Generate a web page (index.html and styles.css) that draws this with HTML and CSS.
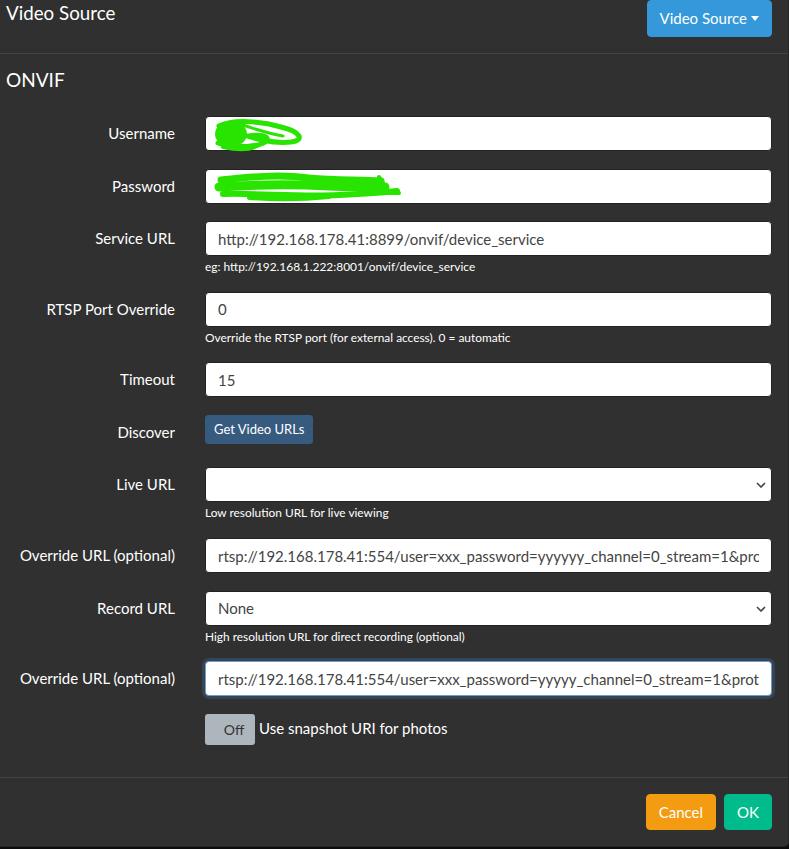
FILE: index.html
```html
<!DOCTYPE html>
<html lang="en">
<head>
<meta charset="utf-8">
<title>Video Source</title>
<link rel="stylesheet" href="styles.css">
</head>
<body>
<div class="modal">
  <div class="modal-header">
    <h5 class="modal-title">Video Source</h5>
    <button class="btn btn-info dropdown-toggle" type="button">Video Source</button>
  </div>
  <div class="modal-body">
    <h4 class="section-title">ONVIF</h4>

    <div class="form-row">
      <label class="col-label">Username</label>
      <div class="field">
        <div class="redacted">
          <input class="form-control" type="text" value="">
          <svg class="scribble" width="100" height="36" viewBox="0 0 100 36">
            <g fill="none" stroke="#28e400" stroke-linecap="round" stroke-linejoin="round">
              <ellipse cx="22" cy="18" rx="14" ry="11" fill="#28e400" stroke-width="4"/>
              <path d="M10 10 C24 3, 52 5, 72 11 C92 16, 96 24, 82 26 C62 28, 44 22, 32 18" stroke-width="5"/>
              <path d="M9 27 C26 33, 54 31, 58 24 C60 20, 50 18, 40 20" stroke-width="5"/>
              <path d="M30 8 C44 12, 60 18, 74 20" stroke-width="3"/>
              <path d="M14 31 C28 34, 40 34, 48 30" stroke-width="4"/>
            </g>
          </svg>
        </div>
      </div>
    </div>

    <div class="form-row">
      <label class="col-label">Password</label>
      <div class="field">
        <div class="redacted">
          <input class="form-control" type="text" value="">
          <svg class="scribble" width="200" height="36" viewBox="0 0 200 36">
            <g fill="none" stroke="#28e400" stroke-linecap="round" stroke-linejoin="round">
              <path d="M12 11 C40 8, 70 5, 100 9 C130 12, 150 10, 172 12" stroke-width="7"/>
              <path d="M10 18 C40 16, 80 15, 120 17 C145 18, 160 18, 176 18" stroke-width="9"/>
              <path d="M14 25 C50 24, 90 28, 130 26 C150 25, 170 24, 188 22" stroke-width="6"/>
              <path d="M40 29 C70 31, 100 30, 120 28" stroke-width="4"/>
              <path d="M160 22 C172 24, 182 24, 190 24" stroke-width="4"/>
              <path d="M170 8 L174 14" stroke-width="4"/>
            </g>
          </svg>
        </div>
      </div>
    </div>

    <div class="form-row">
      <label class="col-label">Service URL</label>
      <div class="field">
        <input class="form-control" type="text" value="http://192.168.178.41:8899/onvif/device_service">
        <small class="help">eg: http://192.168.1.222:8001/onvif/device_service</small>
      </div>
    </div>

    <div class="form-row">
      <label class="col-label">RTSP Port Override</label>
      <div class="field">
        <input class="form-control" type="text" value="0">
        <small class="help">Override the RTSP port (for external access). 0 = automatic</small>
      </div>
    </div>

    <div class="form-row">
      <label class="col-label">Timeout</label>
      <div class="field">
        <input class="form-control" type="text" value="15">
      </div>
    </div>

    <div class="form-row">
      <label class="col-label">Discover</label>
      <div class="field">
        <button class="btn btn-primary btn-sm" type="button">Get Video URLs</button>
      </div>
    </div>

    <div class="form-row">
      <label class="col-label">Live URL</label>
      <div class="field">
        <div class="select-wrap">
          <select class="form-control"><option></option></select>
          <svg class="chevron" width="10" height="6" viewBox="0 0 10 6"><path d="M1 1 L5 5 L9 1" fill="none" stroke="#444" stroke-width="1.6"/></svg>
        </div>
        <small class="help">Low resolution URL for live viewing</small>
      </div>
    </div>

    <div class="form-row">
      <label class="col-label">Override URL (optional)</label>
      <div class="field">
        <input class="form-control" type="text" value="rtsp://192.168.178.41:554/user=xxx_password=yyyyyy_channel=0_stream=1&amp;protocol=0">
      </div>
    </div>

    <div class="form-row">
      <label class="col-label">Record URL</label>
      <div class="field">
        <div class="select-wrap">
          <select class="form-control"><option>None</option></select>
          <svg class="chevron" width="10" height="6" viewBox="0 0 10 6"><path d="M1 1 L5 5 L9 1" fill="none" stroke="#444" stroke-width="1.6"/></svg>
        </div>
        <small class="help">High resolution URL for direct recording (optional)</small>
      </div>
    </div>

    <div class="form-row">
      <label class="col-label">Override URL (optional)</label>
      <div class="field">
        <input class="form-control is-focused" type="text" value="rtsp://192.168.178.41:554/user=xxx_password=yyyyy_channel=0_stream=1&amp;protocol=0">
      </div>
    </div>

    <div class="form-row toggle-row">
      <div class="col-label"></div>
      <div class="field toggle-field">
        <span class="toggle">Off</span>
        <label class="toggle-label">Use snapshot URI for photos</label>
      </div>
    </div>
  </div>
  <div class="modal-footer">
    <button class="btn btn-warning" type="button">Cancel</button>
    <button class="btn btn-success" type="button">OK</button>
  </div>
</div>
</body>
</html>
```
FILE: styles.css
```css
html {
  background: #0c0c0c;
}
body {
  margin: 0;
  overflow: hidden;
  font-family: Lato, "Open Sans", "Liberation Sans", sans-serif;
  font-size: 15px;
  line-height: 1.5;
  color: #fff;
}
.modal {
  box-sizing: border-box;
  width: 800px;
  margin: -17px 0 0 -11px;
  background: #303030;
  border: 1px solid rgba(0, 0, 0, 0.2);
  border-radius: 5px;
}
.modal-header {
  display: flex;
  justify-content: space-between;
  align-items: flex-start;
  padding: 16px;
  border-bottom: 1px solid #444;
}
.modal-title {
  margin: -1px 0 0;
  font-size: 18.75px;
  font-weight: 400;
  line-height: 1.5;
}
.btn {
  display: inline-flex;
  align-items: center;
  font-family: inherit;
  font-size: 15px;
  line-height: 22.5px;
  padding: 6px 12px;
  border: 1px solid transparent;
  border-radius: 4px;
  color: #fff;
  cursor: pointer;
}
.btn-info {
  background: #3498db;
  border-color: #3498db;
}
.dropdown-toggle::after {
  content: "";
  display: inline-block;
  margin-left: 4px;
  margin-top: 1px;
  border-top: 5px solid #fff;
  border-left: 4.5px solid transparent;
  border-right: 4.5px solid transparent;
}
.btn-primary {
  background: #375a7f;
  border-color: #375a7f;
}
.btn-sm {
  font-size: 13px;
  line-height: 19.5px;
  padding: 4px 8px;
  border-radius: 3px;
}
.btn-warning {
  background: #f39c12;
  border-color: #f39c12;
}
.btn-success {
  background: #00bc8c;
  border-color: #00bc8c;
}
.modal-body {
  padding: 16px;
}
.section-title {
  margin: -2px 0 24.5px;
  font-size: 19px;
  font-weight: 400;
  line-height: 24px;
}
.form-row {
  display: grid;
  grid-template-columns: 169px 567px;
  column-gap: 30px;
  margin-bottom: 17.5px;
}
.col-label {
  text-align: right;
  padding: 6px 0;
  line-height: 23px;
}
.field {
  display: flex;
  flex-direction: column;
  align-items: flex-start;
}
.form-control {
  box-sizing: border-box;
  display: block;
  width: 100%;
  height: 35px;
  margin: 0;
  padding: 6px 12px;
  font-family: inherit;
  font-size: 15px;
  color: #444;
  background: #fff;
  border: 1px solid #222;
  border-radius: 4px;
  outline: none;
}
select.form-control {
  appearance: none;
  -webkit-appearance: none;
}
.form-control.is-focused {
  border-color: #739ac2;
  box-shadow: 0 0 0 3px rgba(55, 90, 127, 0.5);
}
.redacted,
.select-wrap {
  position: relative;
  width: 100%;
}
.scribble {
  position: absolute;
  left: 4px;
  top: 0;
}
.chevron {
  position: absolute;
  right: 6px;
  top: 15px;
}
.help {
  display: block;
  margin-top: 4px;
  font-size: 11.9px;
  line-height: 14.2px;
  color: #fff;
}
.toggle-row {
  height: 31.5px;
  margin-bottom: 15.5px;
}
.toggle-field {
  flex-direction: row;
  align-items: flex-start;
  gap: 4px;
}
.toggle {
  box-sizing: border-box;
  width: 50px;
  height: 31px;
  padding-left: 8px;
  display: flex;
  align-items: center;
  justify-content: center;
  font-size: 14px;
  color: #333;
  background: #adb5bd;
  border-radius: 3px;
}
.toggle-label {
  padding-top: 3px;
  line-height: 22px;
}
.modal-footer {
  display: flex;
  justify-content: flex-end;
  gap: 8px;
  padding: 16px;
  border-top: 1px solid #444;
}
```
